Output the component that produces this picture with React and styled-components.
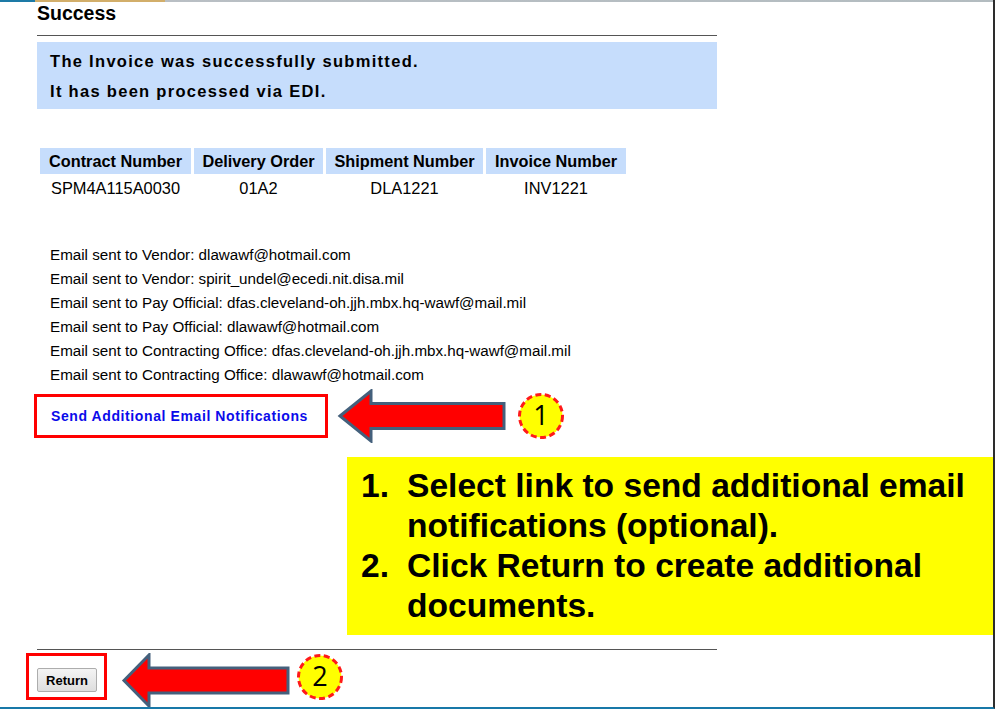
import React from 'react';
import styled, { createGlobalStyle } from 'styled-components';

const GlobalStyle = createGlobalStyle`
  html, body { margin: 0; padding: 0; background: #fff; }
  body { font-family: "Liberation Sans", Arial, sans-serif; color: #000; }
`;

const Page = styled.div`
  position: relative;
  width: 995px;
  height: 709px;
  box-sizing: border-box;
  border-right: 2px solid #2d2d2d;
  border-bottom: 2px solid #1878a8;
  display: flex;
  flex-direction: column;
  overflow: hidden;
`;

const TopStrip = styled.div`
  height: 2px;
  flex: none;
  background: linear-gradient(to right, #1d7aa6 0, #1d7aa6 35px, #d2ae6a 35px, #d2ae6a 165px, #b9bfc4 165px, #b3bcc0 100%);
`;

const Content = styled.div`
  padding-left: 37px;
  width: 680px;
  display: flex;
  flex-direction: column;
  flex: 1;
`;

const Title = styled.h1`
  margin: 0;
  height: 33px;
  padding-top: 1px;
  box-sizing: border-box;
  font-size: 19.5px;
  line-height: 20px;
  font-weight: bold;
`;

const Rule = styled.div`
  height: 1px;
  background: #555;
  flex: none;
`;

const Notice = styled.div`
  margin-top: 6px;
  height: 67px;
  box-sizing: border-box;
  padding: 4px 0 0 13px;
  background: #c6ddfc;
  font-weight: bold;
  font-size: 16.5px;
  letter-spacing: 1.3px;
  line-height: 30px;
`;

const Table = styled.table`
  align-self: flex-start;
  margin: 36px 0 0 0;
  border-spacing: 3px;
  border-collapse: separate;
`;

const Th = styled.th`
  background: #c6ddfc;
  height: 26px;
  padding: 0;
  width: ${p => p.$w}px;
  min-width: ${p => p.$w}px;
  font-size: 16.3px;
  font-weight: bold;
  text-align: center;
  white-space: nowrap;
`;

const Td = styled.td`
  height: 22px;
  padding: 0;
  font-size: 16.4px;
  text-align: center;
`;

const Emails = styled.div`
  margin-top: 41px;
  padding-left: 13px;
  font-size: 15.2px;
  line-height: 24px;
`;

const Row = styled.div`
  display: flex;
  align-items: ${p => p.$align || 'center'};
  margin-top: ${p => p.$mt}px;
  height: ${p => (p.$h ? `${p.$h}px` : 'auto')};
`;

const LinkBox = styled.div`
  margin-left: -3px;
  width: 294px;
  height: 44px;
  box-sizing: border-box;
  border: 3px solid #ff0000;
  padding-left: 14px;
  display: flex;
  align-items: center;
`;

const Link = styled.a`
  color: #0b0bea;
  font-weight: bold;
  font-size: 14px;
  letter-spacing: 0.6px;
  text-decoration: none;
`;

const Bottom = styled.div`
  margin-top: auto;
  display: flex;
  flex-direction: column;
`;

const ReturnBox = styled.div`
  margin-left: -11px;
  width: 81px;
  height: 47px;
  box-sizing: border-box;
  border: 3px solid #ff0000;
  padding: 12px 7px 5px 8px;
`;

const Button = styled.button`
  width: 60px;
  height: 24px;
  box-sizing: border-box;
  border: 1px solid #adadad;
  border-radius: 2px;
  background: linear-gradient(#f4f4f4, #dedede);
  font-family: "Liberation Sans", Arial, sans-serif;
  font-weight: bold;
  font-size: 13px;
  padding: 0;
  color: #000;
`;

const Badge = styled.div`
  width: 48px;
  height: 48px;
  flex: none;
  margin-left: ${p => p.$ml}px;
`;

const Callout = styled.div`
  position: absolute;
  left: 347px;
  top: 457px;
  right: 0;
  height: 178px;
  box-sizing: border-box;
  background: #ffff00;
  padding: 9px 0 0 14px;
  font-weight: bold;
  font-size: 33.6px;
  line-height: 40px;
`;

const Step = styled.div`
  display: flex;
`;

const StepNum = styled.span`
  width: 46px;
  flex: none;
`;

const Arrow = ({ w, h, head, shaft, ml }) => {
  const mid = h / 2;
  const pts = [
    [3, mid],
    [head, 2],
    [head, mid - shaft / 2],
    [w - 3, mid - shaft / 2],
    [w - 3, mid + shaft / 2],
    [head, mid + shaft / 2],
    [head, h - 2],
  ].map(p => p.join(',')).join(' ');
  return (
    <svg width={w} height={h} style={{ marginLeft: ml, flex: 'none' }}>
      <polygon points={pts} fill="#ff0000" stroke="#44607c" strokeWidth="3" strokeLinejoin="miter" />
    </svg>
  );
};

const NumberBadge = ({ n, ml }) => (
  <Badge $ml={ml}>
    <svg width="48" height="48" viewBox="0 0 48 48">
      <circle cx="24" cy="24" r="21.5" fill="#ffff00" stroke="#ff1a1a" strokeWidth="3" strokeDasharray="6 3.5" />
      <text x="24" y="33" textAnchor="middle" fontSize="27" fontFamily="'Open Sans', 'Liberation Sans', sans-serif" fill="#000">{n}</text>
    </svg>
  </Badge>
);

const emails = [
  'Email sent to Vendor: dlawawf@hotmail.com',
  'Email sent to Vendor: spirit_undel@ecedi.nit.disa.mil',
  'Email sent to Pay Official: dfas.cleveland-oh.jjh.mbx.hq-wawf@mail.mil',
  'Email sent to Pay Official: dlawawf@hotmail.com',
  'Email sent to Contracting Office: dfas.cleveland-oh.jjh.mbx.hq-wawf@mail.mil',
  'Email sent to Contracting Office: dlawawf@hotmail.com',
];

export default function App() {
  return (
    <>
      <GlobalStyle />
      <Page>
        <TopStrip />
        <Content>
          <Title>Success</Title>
          <Rule />
          <Notice>
            <div>The Invoice was successfully submitted.</div>
            <div>It has been processed via EDI.</div>
          </Notice>
          <Table>
            <thead>
              <tr>
                <Th $w={151}>Contract Number</Th>
                <Th $w={129}>Delivery Order</Th>
                <Th $w={157}>Shipment Number</Th>
                <Th $w={140}>Invoice Number</Th>
              </tr>
            </thead>
            <tbody>
              <tr>
                <Td>SPM4A115A0030</Td>
                <Td>01A2</Td>
                <Td>DLA1221</Td>
                <Td>INV1221</Td>
              </tr>
            </tbody>
          </Table>
          <Emails>
            {emails.map(e => <div key={e}>{e}</div>)}
          </Emails>
          <Row $mt={2}>
            <LinkBox>
              <Link href="#">Send Additional Email Notifications</Link>
            </LinkBox>
            <Arrow w={170} h={54} head={34} shaft={25} ml={9} />
            <NumberBadge n="1" ml={10} />
          </Row>
          <Bottom>
            <Rule />
            <Row $mt={3} $h={54} $align="flex-start">
              <ReturnBox>
                <Button>Return</Button>
              </ReturnBox>
              <Arrow w={170} h={55} head={28} shaft={25} ml={14} />
              <NumberBadge n="2" ml={5} />
            </Row>
          </Bottom>
        </Content>
        <Callout>
          <Step><StepNum>1.</StepNum><span>Select link to send additional email<br />notifications (optional).</span></Step>
          <Step><StepNum>2.</StepNum><span>Click Return to create additional<br />documents.</span></Step>
        </Callout>
      </Page>
    </>
  );
}
